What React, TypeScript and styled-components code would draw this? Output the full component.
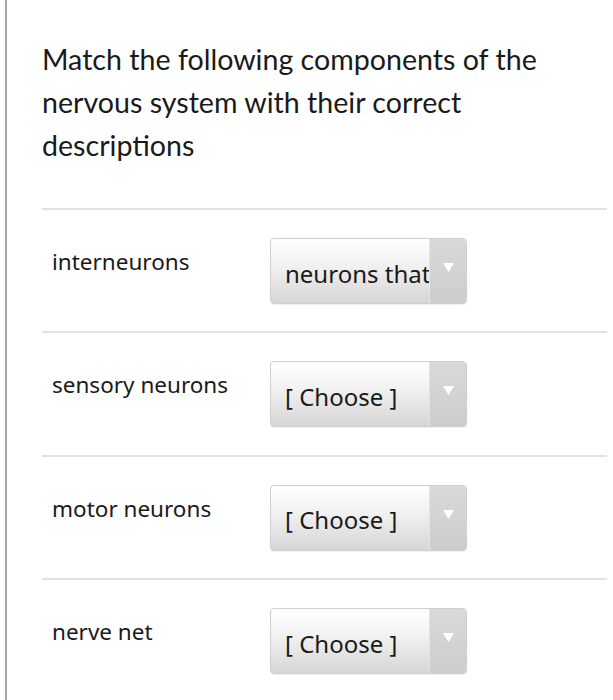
import React from "react";
import styled, { createGlobalStyle } from "styled-components";

const Global = createGlobalStyle`
  html, body { margin: 0; padding: 0; background: #fff; }
  body { font-family: Lato, "Noto Sans", sans-serif; color: #222; }
`;

const Frame = styled.div`
  margin-left: 5px;
  border-left: 2px solid #a8a8a8;
  min-height: 700px;
  padding: 38px 6px 0 35px;
  box-sizing: border-box;
`;

const Title = styled.h1`
  margin: 0 0 41px 0;
  font-family: Lato, sans-serif;
  font-weight: 400;
  font-size: 28.6px;
  line-height: 43px;
  color: #1a1a1a;
`;

const Row = styled.div`
  display: flex;
  align-items: flex-start;
  border-top: 2px solid #e2e2e2;
  padding: 28px 0 27.4px 10px;
`;

const Label = styled.div`
  width: 218px;
  margin-top: 10px;
  font-family: "Noto Sans", "Open Sans", sans-serif;
  font-size: 22.5px;
  line-height: 28px;
  color: #1a1a1a;
`;

const Select = styled.div`
  display: flex;
  width: 197px;
  height: 66px;
  box-sizing: border-box;
  border: 1px solid #cfcfcf;
  border-radius: 4px;
  overflow: hidden;
  background: linear-gradient(#ffffff, #f2f2f2 40%, #d6d6d6);
  box-shadow: 0 1px 1px rgba(0, 0, 0, 0.06);
`;

const Value = styled.div`
  flex: 1;
  min-width: 0;
  overflow: hidden;
  white-space: nowrap;
  padding: 4px 0 0 14px;
  display: flex;
  align-items: center;
  font-family: "Noto Sans", "Open Sans", sans-serif;
  font-size: 24px;
  color: #1a1a1a;
`;

const Arrow = styled.div`
  width: 37px;
  flex: none;
  border-left: 1px solid #e4e4e4;
  background: linear-gradient(#d9d9d9, #cdcdcd);
  display: flex;
  justify-content: center;
  padding-top: 24px;
  box-sizing: border-box;
`;

const rows = [
  { label: "interneurons", value: "neurons that" },
  { label: "sensory neurons", value: "[ Choose ]" },
  { label: "motor neurons", value: "[ Choose ]" },
  { label: "nerve net", value: "[ Choose ]" },
];

export default function App() {
  return (
    <>
      <Global />
      <Frame>
        <Title>
          Match the following components of the nervous system with their correct descriptions
        </Title>
        {rows.map((r) => (
          <Row key={r.label}>
            <Label>{r.label}</Label>
            <Select>
              <Value>{r.value}</Value>
              <Arrow>
                <svg width="11" height="9" viewBox="0 0 11 9">
                  <path d="M0 0 H11 L5.5 9 Z" fill="#fff" />
                </svg>
              </Arrow>
            </Select>
          </Row>
        ))}
      </Frame>
    </>
  );
}
